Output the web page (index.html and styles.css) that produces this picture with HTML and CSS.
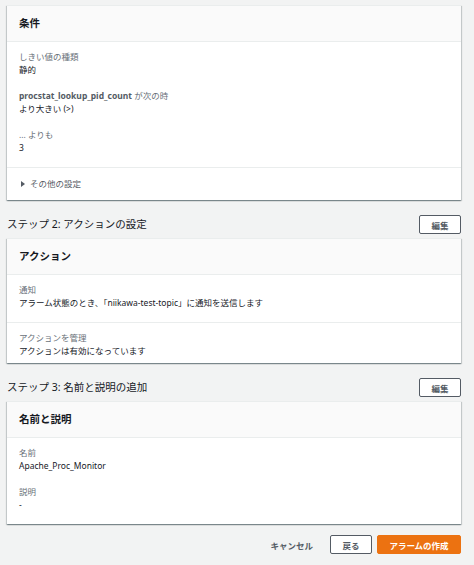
FILE: index.html
```html
<!DOCTYPE html>
<html lang="ja">

<head>
  <meta charset="UTF-8">
  <title>アラームの作成 - 確認</title>
  <link rel="stylesheet" href="styles.css">
</head>

<body>
  <div class="page">

    <div class="card">
      <div class="card-head">条件</div>
      <div class="card-body">
        <div class="field">
          <div class="label">しきい値の種類</div>
          <div class="value">静的</div>
        </div>
        <div class="field">
          <div class="label"><b>procstat_lookup_pid_count</b> が次の時</div>
          <div class="value">より大きい (&gt;)</div>
        </div>
        <div class="field">
          <div class="label">... よりも</div>
          <div class="value">3</div>
        </div>
      </div>
      <div class="expander"><span class="caret"></span>その他の設定</div>
    </div>

    <div class="step">
      <h2>ステップ 2: アクションの設定</h2>
      <button class="btn">編集</button>
    </div>

    <div class="card">
      <div class="card-head">アクション</div>
      <div class="card-body">
        <div class="field">
          <div class="label">通知</div>
          <div class="value">アラーム状態のとき、「niikawa-test-topic」に通知を送信します</div>
        </div>
      </div>
      <div class="card-body last">
        <div class="field">
          <div class="label">アクションを管理</div>
          <div class="value">アクションは有効になっています</div>
        </div>
      </div>
    </div>

    <div class="step">
      <h2>ステップ 3: 名前と説明の追加</h2>
      <button class="btn">編集</button>
    </div>

    <div class="card">
      <div class="card-head">名前と説明</div>
      <div class="card-body">
        <div class="field">
          <div class="label">名前</div>
          <div class="value">Apache_Proc_Monitor</div>
        </div>
        <div class="field">
          <div class="label">説明</div>
          <div class="value">-</div>
        </div>
      </div>
    </div>

    <div class="actions">
      <button class="link">キャンセル</button>
      <button class="btn">戻る</button>
      <button class="btn primary">アラームの作成</button>
    </div>

  </div>
</body>

</html>
```

FILE: styles.css
```css
body {
  font-family: "Noto Sans", "Noto Sans CJK JP", sans-serif;
  background: #f2f3f3;
  margin: 0;
  color: #16191f;
  font-size: 8.5px;
  line-height: 13px;
}

.page {
  width: 454px;
  margin: 0 0 0 7px;
  padding-top: 5px;
}

.card {
  background: #fff;
  border-top: 1px solid #eaeded;
  box-shadow: 0 1px 1px 0 rgba(0, 28, 36, 0.3), 1px 1px 1px 0 rgba(0, 28, 36, 0.15), -1px 1px 1px 0 rgba(0, 28, 36, 0.15);
}

.card-head {
  background: #fafafa;
  border-bottom: 1px solid #eaeded;
  height: 35px;
  line-height: 35px;
  padding: 0 12px;
  font-size: 10.5px;
  font-weight: bold;
  color: #16191f;
}

.card-body {
  padding: 8px 12px 13px;
  display: flex;
  flex-direction: column;
  gap: 13px;
}

.card-body + .card-body {
  border-top: 1px solid #eaeded;
}

.card-body.last {
  padding-bottom: 6px;
}

.label {
  color: #687078;
}

.label b {
  color: #545b64;
}

.value {
  color: #16191f;
}

.expander {
  border-top: 1px solid #eaeded;
  height: 32px;
  line-height: 32px;
  padding: 0 14px;
  color: #545b64;
  display: flex;
  align-items: center;
}

.caret {
  width: 0;
  height: 0;
  border-left: 4px solid #545b64;
  border-top: 3px solid transparent;
  border-bottom: 3px solid transparent;
  margin-right: 5px;
}

.step {
  display: flex;
  align-items: center;
  justify-content: space-between;
  margin: 15px 0 4px;
}

.step h2 {
  margin: 0;
  font-size: 10.5px;
  font-weight: normal;
  color: #16191f;
}

.btn {
  font-family: inherit;
  font-size: 8.5px;
  font-weight: bold;
  width: 42px;
  height: 19px;
  padding: 0;
  background: #fff;
  color: #545b64;
  border: 1px solid #545b64;
  border-radius: 2px;
  cursor: pointer;
}

.btn.primary {
  width: 84px;
  background: #ec7211;
  border-color: #ec7211;
  color: #fff;
}

.actions {
  display: flex;
  justify-content: flex-end;
  align-items: center;
  gap: 5px;
  margin-top: 11px;
}

.link {
  font-family: inherit;
  font-size: 8.5px;
  font-weight: bold;
  color: #545b64;
  background: none;
  border: none;
  height: 19px;
  padding: 0;
  margin-right: 12px;
}
```
